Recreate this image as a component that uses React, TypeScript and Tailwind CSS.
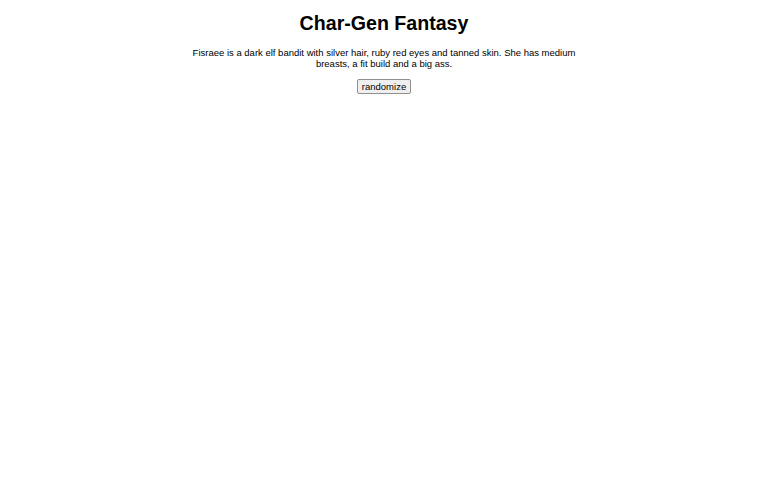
export default function App() {
  return (
    <div className="min-h-screen bg-white text-black" style={{ fontFamily: '"Liberation Sans", Arial, sans-serif' }}>
      <div className="mx-auto flex w-[412px] flex-col items-center pt-[12px] text-center">
        <h1 className="text-[19.6px] font-bold leading-[23px]">Char-Gen Fantasy</h1>
        <p className="mt-[12px] text-[9.5px] leading-[11px]">
          Fisraee is a dark elf bandit with silver hair, ruby red eyes and tanned skin. She has medium breasts, a fit build and a big ass.
        </p>
        <button className="mt-[10px] rounded-[2px] border border-[#8f8f8f] bg-[#efefef] px-[4px] text-[9.5px] leading-[13px]">
          randomize
        </button>
      </div>
    </div>
  );
}
